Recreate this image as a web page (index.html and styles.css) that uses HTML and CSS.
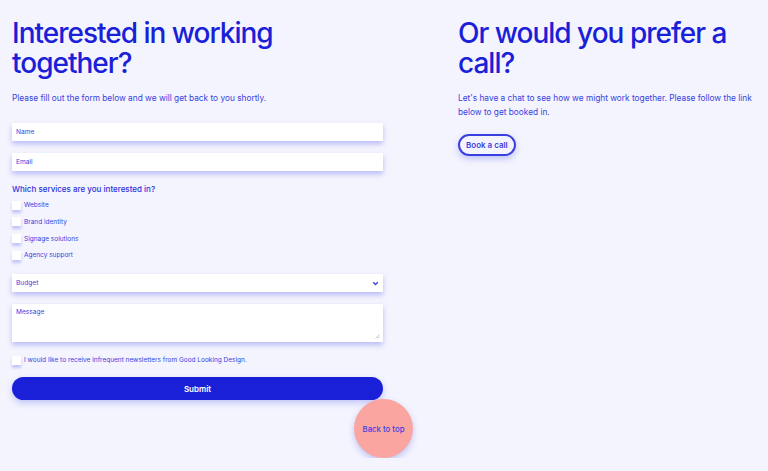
FILE: index.html
```html
<!DOCTYPE html>
<html lang="en">
<head>
    <meta charset="UTF-8">
    <meta name="viewport" content="width=device-width, initial-scale=1.0">
    <title>Contact</title>
    <link rel="stylesheet" href="styles.css">
</head>
<body>
    <div class="page">
        <div class="column form-column">
            <h1>Interested in working together?</h1>
            <p class="intro">Please fill out the form below and we will get back to you shortly.</p>

            <form class="contact-form" onsubmit="return false;">
                <input type="text" class="field" placeholder="Name">
                <input type="email" class="field" placeholder="Email">

                <div class="services">
                    <h2>Which services are you interested in?</h2>
                    <label class="check"><span class="box"></span>Website</label>
                    <label class="check"><span class="box"></span>Brand identity</label>
                    <label class="check"><span class="box"></span>Signage solutions</label>
                    <label class="check"><span class="box"></span>Agency support</label>
                </div>

                <div class="field select">
                    <span>Budget</span>
                    <svg width="7" height="5" viewBox="0 0 7 5"><path d="M1.2 1.2l2.3 2.3 2.3-2.3" fill="none" stroke="#3a3fe0" stroke-width="1.3"/></svg>
                </div>

                <div class="field textarea">
                    <span>Message</span>
                    <svg class="grip" width="5" height="5" viewBox="0 0 5 5"><path d="M4.5 0.5L0.5 4.5M4.5 2.5L2.5 4.5" stroke="#b8b8c8" stroke-width="0.8"/></svg>
                </div>

                <label class="check newsletter"><span class="box"></span>I would like to receive infrequent newsletters from Good Looking Design.</label>

                <button class="submit">Submit</button>
            </form>

            <a class="back-to-top" href="#">Back to top</a>
        </div>

        <div class="column call-column">
            <h1>Or would you prefer a call?</h1>
            <p class="intro">Let's have a chat to see how we might work together. Please follow the link below to get booked in.</p>
            <a class="book-call" href="#">Book a call</a>
        </div>
    </div>
</body>
</html>
```

FILE: styles.css
```css
body {
    margin: 0;
    background-color: #f3f4fd;
    font-family: Inter, "Noto Sans", sans-serif;
    color: #3a3fe0;
}
.page {
    display: flex;
    gap: 75px;
    padding: 18px 6px 0 12px;
}
.form-column {
    width: 371px;
    flex-shrink: 0;
    display: flex;
    flex-direction: column;
}
.call-column {
    flex: 1;
}
h1 {
    font-size: 28px;
    line-height: 30px;
    font-weight: 500;
    color: #1a20d8;
    margin: 0;
    letter-spacing: -1px;
}
.form-column h1 {
    width: 290px;
}
.intro {
    font-size: 8.3px;
    line-height: 13.5px;
    margin: 14px 0 0;
}
.contact-form {
    display: flex;
    flex-direction: column;
    margin-top: 17px;
}
.field {
    height: 18px;
    border: none;
    background: #fff;
    box-shadow: 0 3px 5px rgba(80, 85, 240, 0.35);
    font-family: inherit;
    font-size: 6.6px;
    color: #3a3fe0;
    padding: 0 4px;
    margin-bottom: 12px;
    outline: none;
    box-sizing: border-box;
}
.field::placeholder {
    color: #3a3fe0;
}
.services {
    display: flex;
    flex-direction: column;
    gap: 6.7px;
    margin: 1px 0 14px;
}
.services h2 {
    font-size: 8px;
    line-height: 11px;
    font-weight: 500;
    color: #2a30dc;
    margin: 0 0 -1px;
}
.check {
    display: flex;
    align-items: center;
    gap: 3px;
    height: 10px;
    font-size: 6.5px;
}
.box {
    width: 9px;
    height: 9px;
    background: #fff;
    box-shadow: 0 3px 3px rgba(80, 85, 240, 0.3);
    flex-shrink: 0;
}
.select {
    display: flex;
    align-items: center;
    justify-content: space-between;
    padding-right: 4px;
}
.textarea {
    height: 38px;
    position: relative;
    padding-top: 4px;
}
.grip {
    position: absolute;
    right: 3px;
    bottom: 3px;
}
.newsletter {
    margin: 1px 0 12px;
}
.submit {
    height: 23px;
    border: none;
    border-radius: 12px;
    background-color: #1a20d8;
    color: #fff;
    font-family: inherit;
    font-size: 8px;
    font-weight: 600;
    box-shadow: 0 3px 6px rgba(80, 85, 240, 0.3);
    cursor: pointer;
}
.back-to-top {
    margin: -1px 0 0 342px;
    width: 59px;
    height: 59px;
    border-radius: 50%;
    background-color: #fba5a1;
    box-shadow: 0 3px 6px rgba(80, 85, 240, 0.3);
    display: flex;
    align-items: center;
    justify-content: center;
    font-size: 7.8px;
    font-weight: 500;
    color: #3a3fe0;
    text-decoration: none;
}
.book-call {
    display: inline-block;
    margin-top: 15px;
    padding: 4px 6px;
    line-height: 10px;
    border: 2px solid #3a3fe0;
    border-radius: 12px;
    font-size: 8px;
    font-weight: 600;
    color: #3a3fe0;
    text-decoration: none;
    box-shadow: 0 3px 6px rgba(80, 85, 240, 0.3);
}
```
